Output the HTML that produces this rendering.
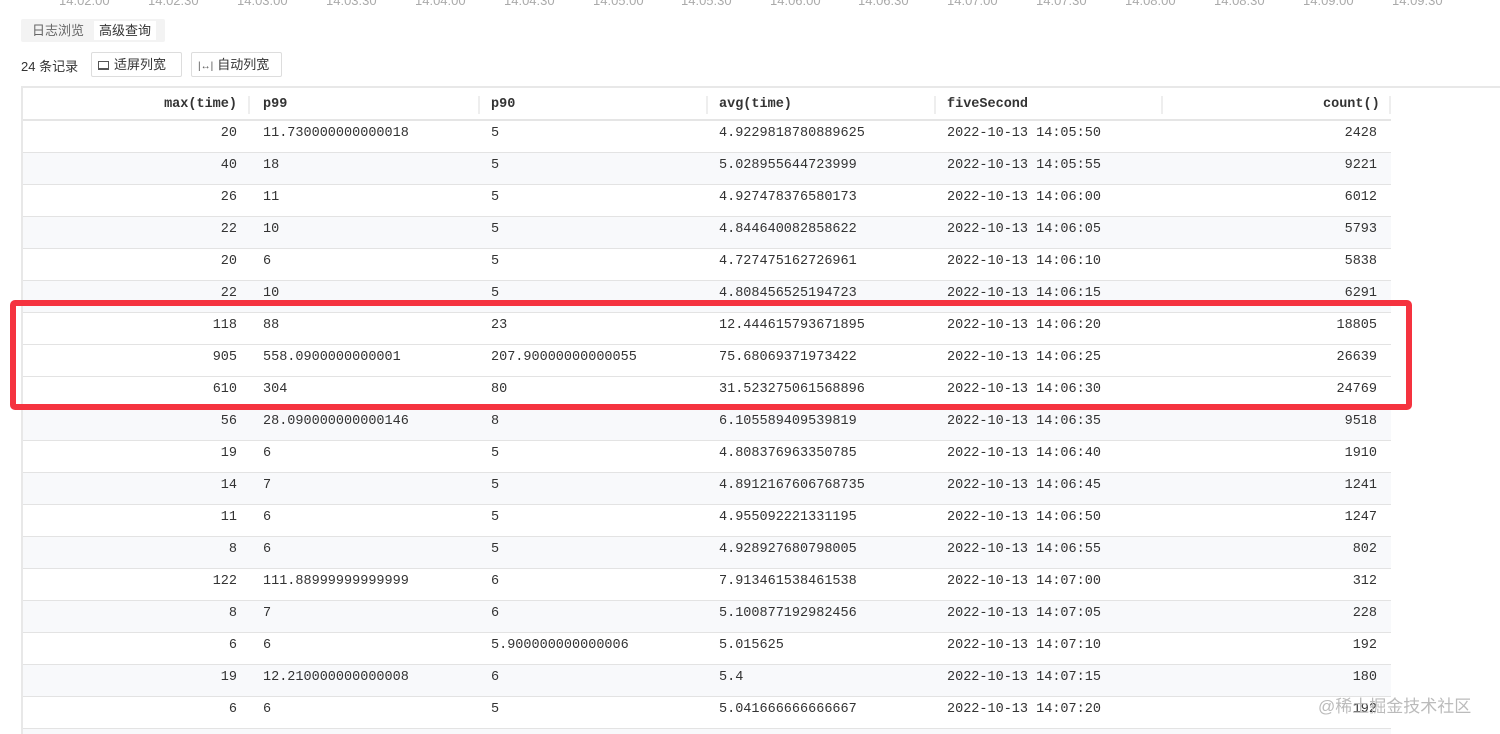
<!DOCTYPE html>
<html><head><meta charset="utf-8"><style>
*{margin:0;padding:0;box-sizing:border-box}
body{width:1500px;height:734px;overflow:hidden;background:#fff;font-family:"Liberation Sans","Noto Sans CJK SC",sans-serif;color:#333;position:relative}
.ax{position:absolute;top:-7px;font-size:13px;color:#aaa}
.tabs{position:absolute;left:21px;top:19px;height:23px;background:#f3f3f3;border-radius:2px;width:144px;font-size:13px}
.tabs span{position:absolute;top:2px;height:19px;line-height:19px;padding:0 5px}
.tb{position:absolute;top:52px;height:25px;border:1px solid #ddd;border-radius:2px;font-size:13px;line-height:23px;padding:0 6px;color:#333;white-space:nowrap}
.tbl{position:absolute;left:21px;top:86px;width:1479px;height:648px;border-top:2px solid #e8e8e8;border-left:2px solid #e8e8e8;overflow:hidden}
.m{font-family:"Liberation Mono",monospace;font-size:13.5px;color:#333}
.hd{position:absolute;left:0;top:0;height:33px;width:1368px;border-bottom:2px solid #e5e5e5;font-weight:bold}
.row{position:absolute;left:0;width:1368px;height:32px;border-bottom:1px solid #e3e3e3}
.row.s{background:#f8f9fb}
.c{position:absolute;top:1px;line-height:24px;white-space:pre}
.hd .c{line-height:33px;top:0}
.c2{left:240px}.c3{left:468px}.c4{left:696px}.c5{left:924px}.r6{left:1300px;width:54px;text-align:right}
.r1{left:120px;width:94px;text-align:right}
.sep{position:absolute;top:8px;width:2px;height:18px;background:#eee}
.box{position:absolute;left:10px;top:300px;width:1402px;height:110px;border:6px solid #f5333f;border-radius:5px}
.wm{position:absolute;left:1318px;top:692px;font-size:17px;color:#bbb}
</style></head><body>
<div class="ax" style="left:59px">14:02:00</div><div class="ax" style="left:148px">14:02:30</div><div class="ax" style="left:237px">14:03:00</div><div class="ax" style="left:326px">14:03:30</div><div class="ax" style="left:415px">14:04:00</div><div class="ax" style="left:504px">14:04:30</div><div class="ax" style="left:593px">14:05:00</div><div class="ax" style="left:681px">14:05:30</div><div class="ax" style="left:770px">14:06:00</div><div class="ax" style="left:858px">14:06:30</div><div class="ax" style="left:947px">14:07:00</div><div class="ax" style="left:1036px">14:07:30</div><div class="ax" style="left:1125px">14:08:00</div><div class="ax" style="left:1214px">14:08:30</div><div class="ax" style="left:1303px">14:09:00</div><div class="ax" style="left:1392px">14:09:30</div>
<div class="tabs"><span style="left:6px;color:#666">日志浏览</span><span style="left:73px;background:#fff;color:#333">高级查询</span></div>
<div style="position:absolute;left:21px;top:56px;font-size:13px">24 条记录</div>
<div class="tb" style="left:91px;width:91px"><span style="display:inline-block;width:11px;height:9px;border:1px solid #555;border-bottom-width:2px;vertical-align:-1px;margin-right:5px"></span>适屏列宽</div>
<div class="tb" style="left:191px;width:91px"><span style="font-size:10px;color:#555;margin-right:4px">|↔|</span>自动列宽</div>
<div class="tbl m">
<div class="hd"><div class="c r1">max(time)</div><div class="sep" style="left:225px"></div><div class="c c2">p99</div><div class="sep" style="left:455px"></div><div class="c c3">p90</div><div class="sep" style="left:683px"></div><div class="c c4">avg(time)</div><div class="sep" style="left:911px"></div><div class="c c5">fiveSecond</div><div class="sep" style="left:1138px"></div><div class="c r6">count()</div><div class="sep" style="left:1366px"></div></div>
<div class="row" style="top:33px"><div class="c r1">20</div><div class="c c2">11.730000000000018</div><div class="c c3">5</div><div class="c c4">4.9229818780889625</div><div class="c c5">2022-10-13 14:05:50</div><div class="c r6">2428</div></div>
<div class="row s" style="top:65px"><div class="c r1">40</div><div class="c c2">18</div><div class="c c3">5</div><div class="c c4">5.028955644723999</div><div class="c c5">2022-10-13 14:05:55</div><div class="c r6">9221</div></div>
<div class="row" style="top:97px"><div class="c r1">26</div><div class="c c2">11</div><div class="c c3">5</div><div class="c c4">4.927478376580173</div><div class="c c5">2022-10-13 14:06:00</div><div class="c r6">6012</div></div>
<div class="row s" style="top:129px"><div class="c r1">22</div><div class="c c2">10</div><div class="c c3">5</div><div class="c c4">4.844640082858622</div><div class="c c5">2022-10-13 14:06:05</div><div class="c r6">5793</div></div>
<div class="row" style="top:161px"><div class="c r1">20</div><div class="c c2">6</div><div class="c c3">5</div><div class="c c4">4.727475162726961</div><div class="c c5">2022-10-13 14:06:10</div><div class="c r6">5838</div></div>
<div class="row s" style="top:193px"><div class="c r1">22</div><div class="c c2">10</div><div class="c c3">5</div><div class="c c4">4.808456525194723</div><div class="c c5">2022-10-13 14:06:15</div><div class="c r6">6291</div></div>
<div class="row" style="top:225px"><div class="c r1">118</div><div class="c c2">88</div><div class="c c3">23</div><div class="c c4">12.444615793671895</div><div class="c c5">2022-10-13 14:06:20</div><div class="c r6">18805</div></div>
<div class="row" style="top:257px"><div class="c r1">905</div><div class="c c2">558.0900000000001</div><div class="c c3">207.90000000000055</div><div class="c c4">75.68069371973422</div><div class="c c5">2022-10-13 14:06:25</div><div class="c r6">26639</div></div>
<div class="row" style="top:289px"><div class="c r1">610</div><div class="c c2">304</div><div class="c c3">80</div><div class="c c4">31.523275061568896</div><div class="c c5">2022-10-13 14:06:30</div><div class="c r6">24769</div></div>
<div class="row s" style="top:321px"><div class="c r1">56</div><div class="c c2">28.090000000000146</div><div class="c c3">8</div><div class="c c4">6.105589409539819</div><div class="c c5">2022-10-13 14:06:35</div><div class="c r6">9518</div></div>
<div class="row" style="top:353px"><div class="c r1">19</div><div class="c c2">6</div><div class="c c3">5</div><div class="c c4">4.808376963350785</div><div class="c c5">2022-10-13 14:06:40</div><div class="c r6">1910</div></div>
<div class="row s" style="top:385px"><div class="c r1">14</div><div class="c c2">7</div><div class="c c3">5</div><div class="c c4">4.8912167606768735</div><div class="c c5">2022-10-13 14:06:45</div><div class="c r6">1241</div></div>
<div class="row" style="top:417px"><div class="c r1">11</div><div class="c c2">6</div><div class="c c3">5</div><div class="c c4">4.955092221331195</div><div class="c c5">2022-10-13 14:06:50</div><div class="c r6">1247</div></div>
<div class="row s" style="top:449px"><div class="c r1">8</div><div class="c c2">6</div><div class="c c3">5</div><div class="c c4">4.928927680798005</div><div class="c c5">2022-10-13 14:06:55</div><div class="c r6">802</div></div>
<div class="row" style="top:481px"><div class="c r1">122</div><div class="c c2">111.88999999999999</div><div class="c c3">6</div><div class="c c4">7.913461538461538</div><div class="c c5">2022-10-13 14:07:00</div><div class="c r6">312</div></div>
<div class="row s" style="top:513px"><div class="c r1">8</div><div class="c c2">7</div><div class="c c3">6</div><div class="c c4">5.100877192982456</div><div class="c c5">2022-10-13 14:07:05</div><div class="c r6">228</div></div>
<div class="row" style="top:545px"><div class="c r1">6</div><div class="c c2">6</div><div class="c c3">5.900000000000006</div><div class="c c4">5.015625</div><div class="c c5">2022-10-13 14:07:10</div><div class="c r6">192</div></div>
<div class="row s" style="top:577px"><div class="c r1">19</div><div class="c c2">12.210000000000008</div><div class="c c3">6</div><div class="c c4">5.4</div><div class="c c5">2022-10-13 14:07:15</div><div class="c r6">180</div></div>
<div class="row" style="top:609px"><div class="c r1">6</div><div class="c c2">6</div><div class="c c3">5</div><div class="c c4">5.041666666666667</div><div class="c c5">2022-10-13 14:07:20</div><div class="c r6">192</div></div>
<div class="row s" style="top:641px"><div class="c r1" style="top:6px">8</div><div class="c c2" style="top:6px">7</div><div class="c c3" style="top:6px">5</div><div class="c c4" style="top:6px">5.000000000000000</div><div class="c c5" style="top:6px">2022-10-13 14:07:25</div><div class="c r6" style="top:6px">188</div></div>
</div>
<div class="box"></div>
<div class="wm">@稀土掘金技术社区</div>
</body></html>
